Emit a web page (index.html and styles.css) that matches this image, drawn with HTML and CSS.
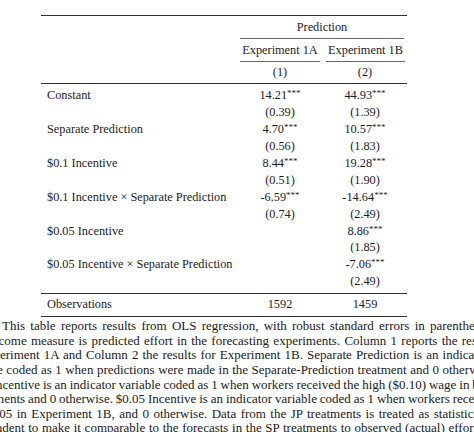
FILE: index.html
```html
<!DOCTYPE html>
<html>
<head>
<meta charset="utf-8">
<link rel="stylesheet" href="styles.css">
</head>
<body>
<div class="page">
  <div class="tbl">
    <div class="row h1">
      <div class="lab"></div>
      <div class="span2"><span class="grp">Prediction</span></div>
    </div>
    <div class="row h2">
      <div class="lab"></div>
      <div class="c1"><span class="exp">Experiment 1A</span></div>
      <div class="c2"><span class="exp">Experiment 1B</span></div>
    </div>
    <div class="row h3">
      <div class="lab"></div>
      <div class="c1">(1)</div>
      <div class="c2">(2)</div>
    </div>
    <div class="body">
      <div class="row d"><div class="lab">Constant</div><div class="c1">14.21<sup>***</sup></div><div class="c2">44.93<sup>***</sup></div></div>
      <div class="row d"><div class="lab"></div><div class="c1">(0.39)</div><div class="c2">(1.39)</div></div>
      <div class="row d"><div class="lab">Separate Prediction</div><div class="c1">4.70<sup>***</sup></div><div class="c2">10.57<sup>***</sup></div></div>
      <div class="row d"><div class="lab"></div><div class="c1">(0.56)</div><div class="c2">(1.83)</div></div>
      <div class="row d"><div class="lab">$0.1 Incentive</div><div class="c1">8.44<sup>***</sup></div><div class="c2">19.28<sup>***</sup></div></div>
      <div class="row d"><div class="lab"></div><div class="c1">(0.51)</div><div class="c2">(1.90)</div></div>
      <div class="row d"><div class="lab">$0.1 Incentive × Separate Prediction</div><div class="c1">-6.59<sup>***</sup></div><div class="c2">-14.64<sup>***</sup></div></div>
      <div class="row d"><div class="lab"></div><div class="c1">(0.74)</div><div class="c2">(2.49)</div></div>
      <div class="row d"><div class="lab">$0.05 Incentive</div><div class="c1"></div><div class="c2">8.86<sup>***</sup></div></div>
      <div class="row d"><div class="lab"></div><div class="c1"></div><div class="c2">(1.85)</div></div>
      <div class="row d"><div class="lab">$0.05 Incentive × Separate Prediction</div><div class="c1"></div><div class="c2">-7.06<sup>***</sup></div></div>
      <div class="row d"><div class="lab"></div><div class="c1"></div><div class="c2">(2.49)</div></div>
    </div>
    <div class="row obs">
      <div class="lab">Observations</div>
      <div class="c1">1592</div>
      <div class="c2">1459</div>
    </div>
  </div>
  <div class="notes">
    <div class="ln l1">This table reports results from OLS regression, with robust standard errors in parentheses.</div>
    <div class="ln l2">Outcome measure is predicted effort in the forecasting experiments. Column 1 reports the results</div>
    <div class="ln l3">Experiment 1A and Column 2 the results for Experiment 1B. Separate Prediction is an indicator</div>
    <div class="ln l4">variable coded as 1 when predictions were made in the Separate-Prediction treatment and 0 otherwise.</div>
    <div class="ln l5">$0.1 Incentive is an indicator variable coded as 1 when workers received the high ($0.10) wage in both</div>
    <div class="ln l6">treatments and 0 otherwise. $0.05 Incentive is an indicator variable coded as 1 when workers received</div>
    <div class="ln l7">$0.05 in Experiment 1B, and 0 otherwise. Data from the JP treatments is treated as statistically</div>
    <div class="ln l8">independent to make it comparable to the forecasts in the SP treatments to observed (actual) effort.</div>
  </div>
</div>
</body>
</html>
```
FILE: styles.css
```css
html, body {
  margin: 0;
  padding: 0;
  background: #ffffff;
}
body {
  width: 474px;
  height: 432px;
  overflow: hidden;
  font-family: "Liberation Serif", "DejaVu Serif", serif;
  color: #1c1c1c;
}
.page {
  padding-top: 15px;
}
.tbl {
  margin-left: 41px;
  width: 366px;
  border-top: 1px solid #333;
  border-bottom: 1px solid #333;
  font-size: 12.3px;
}
.row {
  display: grid;
  grid-template-columns: 196px 86px 84px;
  align-items: center;
}
.lab {
  padding-left: 6px;
  white-space: nowrap;
}
.c1, .c2 {
  text-align: center;
  white-space: nowrap;
}
.h1, .h2 {
  height: 23px;
  align-items: stretch;
}
.span2 {
  grid-column: 2 / 4;
  display: flex;
  align-items: center;
  justify-content: center;
  margin: 0 3px;
  border-bottom: 1px solid #666;
  box-sizing: border-box;
}
.h2 .c1, .h2 .c2 {
  display: flex;
  align-items: center;
  justify-content: center;
  box-sizing: border-box;
  border-bottom: 1px solid #666;
}
.h2 .c1 {
  margin: 0 3px;
}
.h2 .c2 {
  margin: 0 2px 0 3px;
}
.h3 {
  height: 21px;
  border-bottom: 1px solid #333;
}
.body {
  padding-top: 3.5px;
  padding-bottom: 2.5px;
  border-bottom: 1px solid #333;
}
.d {
  height: 16.9px;
}
.obs {
  height: 22px;
}
sup {
  font-size: 9px;
  line-height: 0;
  vertical-align: 3px;
}
.notes {
  margin-top: 2.5px;
  font-size: 13px;
  line-height: 14.6px;
  color: #1a1a1a;
}
.ln {
  white-space: nowrap;
}
.l1 { margin-left: 2px; word-spacing: 2px; }
.l2 { margin-left: -21px; word-spacing: 1px; }
.l3 { margin-left: -21px; word-spacing: 0.85px; }
.l4 { margin-left: -39px; word-spacing: 0.25px; }
.l5 { margin-left: -34px; word-spacing: -0.35px; }
.l6 { margin-left: -29px; word-spacing: -0.35px; }
.l7 { margin-left: -17px; word-spacing: 1.2px; }
.l8 { margin-left: -39px; word-spacing: 0.4px; }
```
